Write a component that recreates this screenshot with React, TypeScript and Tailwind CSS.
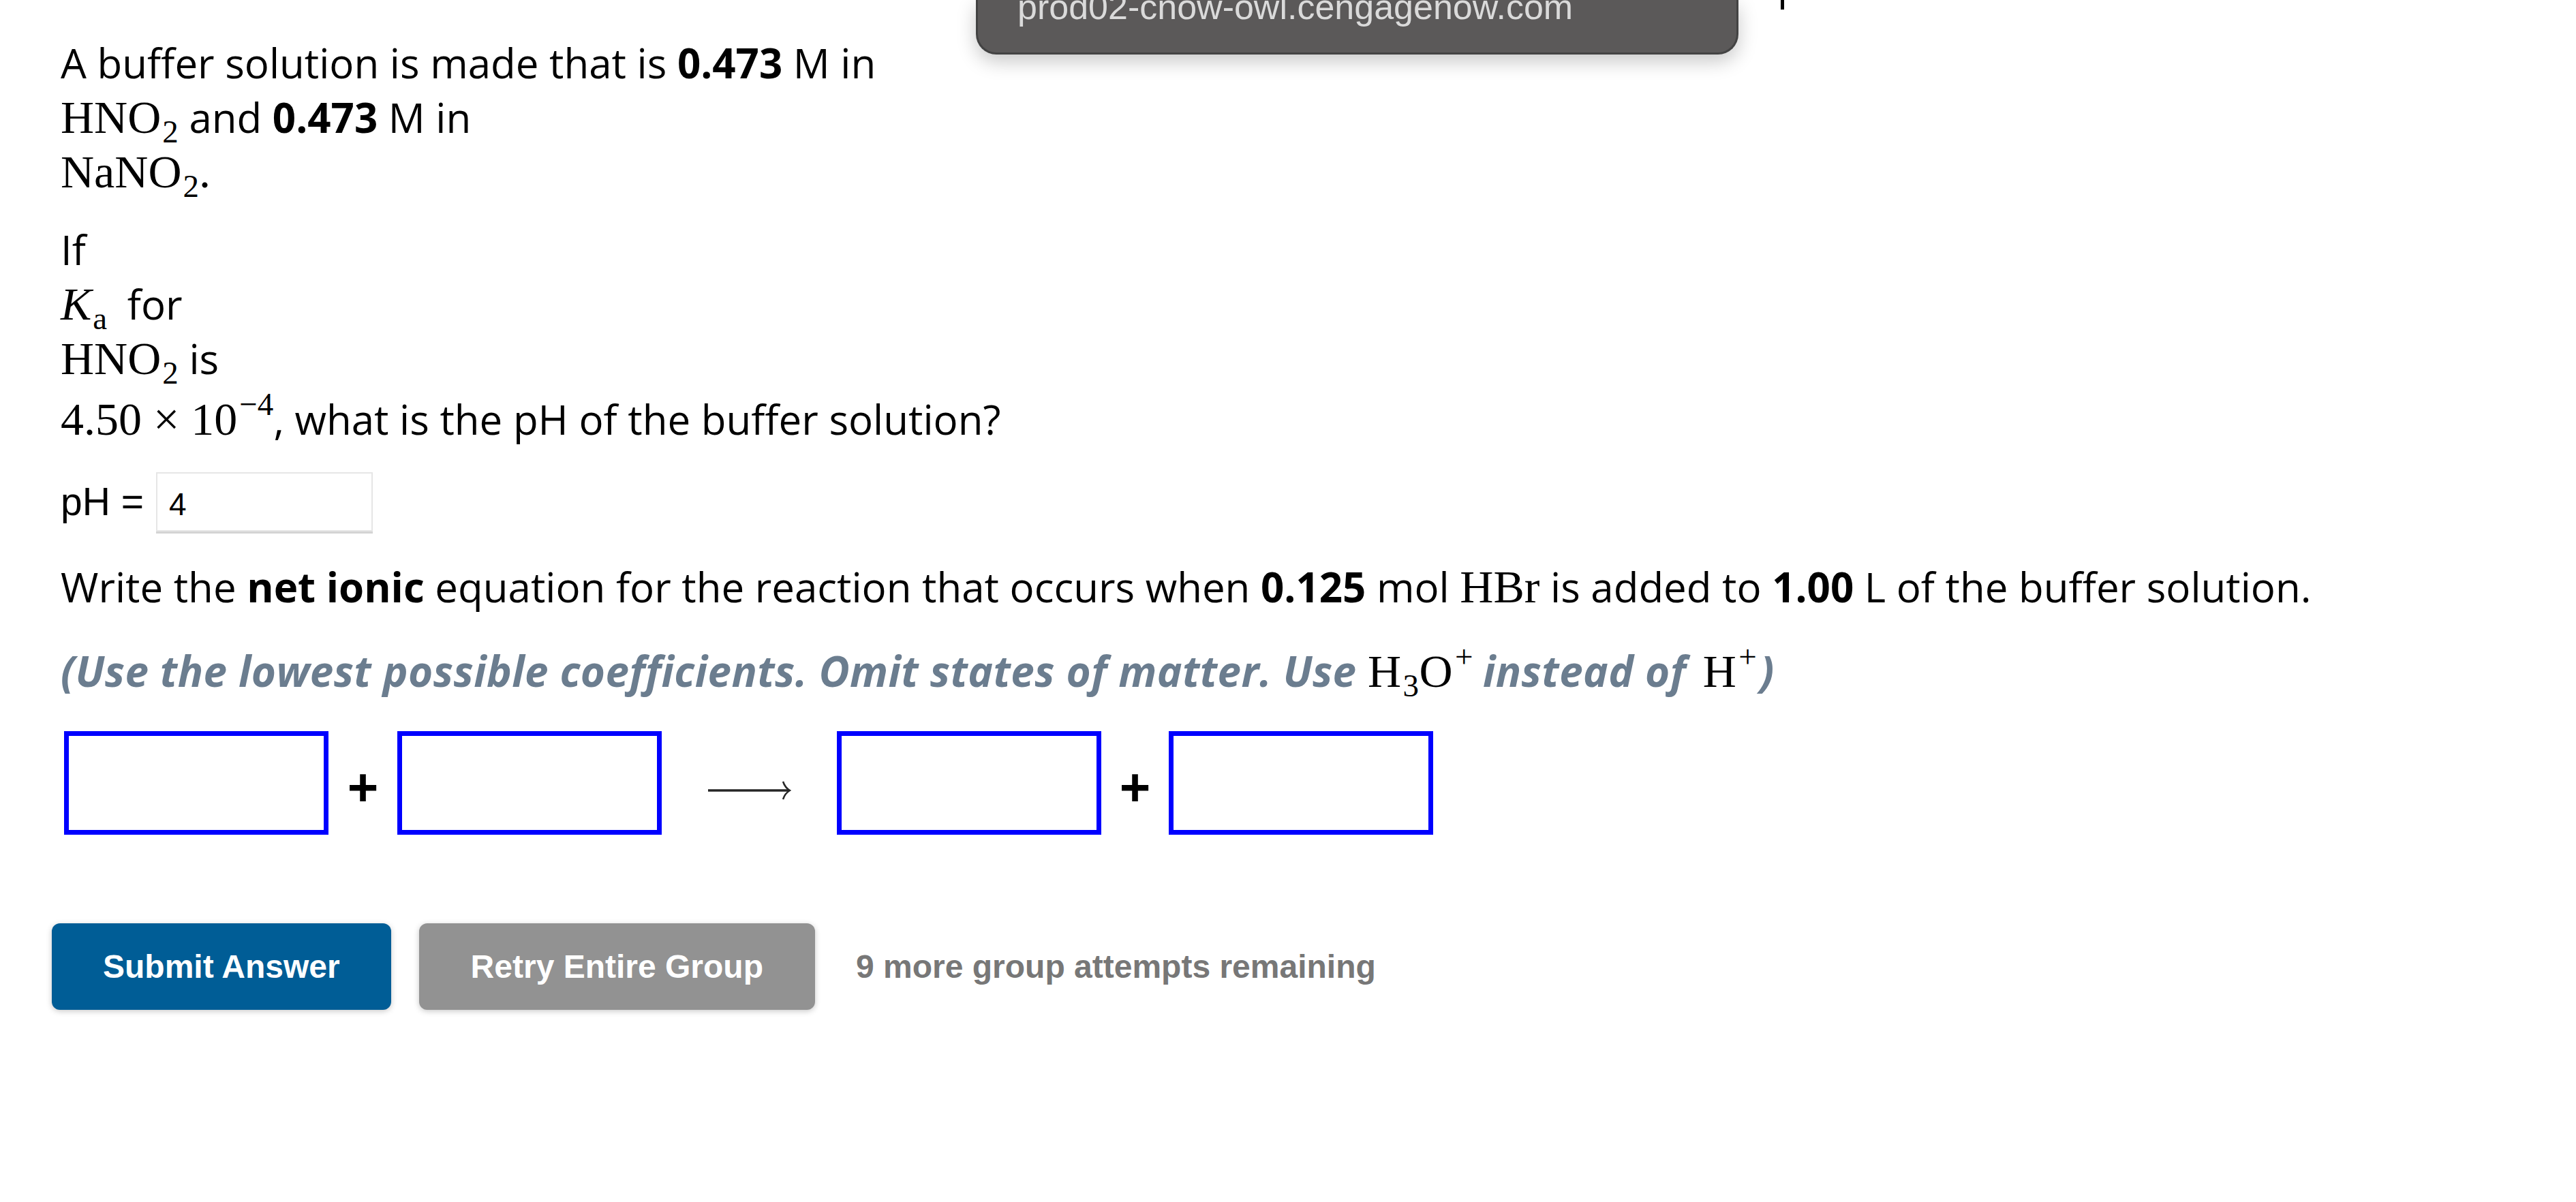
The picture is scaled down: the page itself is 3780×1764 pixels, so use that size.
import React from 'react';

const serif = "font-['Liberation_Serif',serif]";

// chemical formulas / math set in a serif face like the TeX output
const Chem: React.FC<{ children: React.ReactNode }> = ({ children }) => (
  <span className={`${serif} text-[68px] leading-none text-black not-italic font-normal`}>{children}</span>
);

const Sub: React.FC<{ children: React.ReactNode; className?: string }> = ({ children, className }) => (
  <sub className={`text-[47px] bottom-[-0.3em] ml-[2px] ${className ?? ''}`}>{children}</sub>
);

const Sup: React.FC<{ children: React.ReactNode }> = ({ children }) => (
  <sup className="text-[47px] top-[-0.62em] ml-[3px]">{children}</sup>
);

const AnswerBox: React.FC = () => <div className="w-[388px] h-[152px] border-[7px] border-[#0000ff] bg-white shrink-0" />;

const Plus: React.FC<{ w: string }> = ({ w }) => (
  <div className={`${w} h-[152px] flex items-center justify-center pt-[12px] font-['Liberation_Sans',Arial,sans-serif] font-bold text-[78px] leading-none text-black`}>
    +
  </div>
);

const LongArrow: React.FC = () => (
  <svg width="122" height="30" viewBox="0 0 122 30" className="mt-[72px]">
    <path d="M0 15 H118" stroke="#262626" strokeWidth="3.5" />
    <path d="M110 2 Q113 11 120 15 Q113 19 110 28" stroke="#262626" strokeWidth="2.5" fill="none" />
  </svg>
);

const App: React.FC = () => {
  return (
    <div className="relative min-h-screen w-full bg-white overflow-hidden text-black font-['Open_Sans',sans-serif]">
      {/* browser url hover bubble */}
      <div className="absolute top-0 left-[1432px] w-[1119px] h-[80px] bg-[#5b5959] border-[3px] border-t-0 border-[#434343] rounded-b-[30px] shadow-[0_10px_28px_rgba(0,0,0,0.22)] pl-[58px]">
        <div className="-mt-[16px] font-['Liberation_Sans',Arial,sans-serif] text-[52px] leading-[52px] text-[#dadada]">
          prod02-cnow-owl.cengagenow.com
        </div>
      </div>
      <div className="absolute top-0 left-[2613px] w-[5px] h-[14px] bg-black" />

      <div className="pl-[89px] pt-[52px]">
        <div className="text-[60px] leading-[80px]">
          <div>
            A buffer solution is made that is <b className="font-bold">0.473</b> M in
          </div>
          <div>
            <Chem>
              HNO<Sub>2</Sub>
            </Chem>{' '}
            and <b className="font-bold">0.473</b> M in
          </div>
          <div>
            <Chem>
              NaNO<Sub>2</Sub>.
            </Chem>
          </div>
        </div>

        <div className="mt-[34px] text-[60px] leading-[80px]">
          <div>If</div>
          <div>
            <Chem>
              <i>K</i>
              <Sub className="mr-[14px]">a</Sub>
            </Chem>{' '}
            for
          </div>
          <div>
            <Chem>
              HNO<Sub>2</Sub>
            </Chem>{' '}
            is
          </div>
          <div className="mt-[9px]">
            <Chem>
              4.50 × 10<Sup>−4</Sup>
            </Chem>
            , what is the pH of the buffer solution?
          </div>
        </div>

        <div className="mt-[38px] flex items-center">
          <span className="font-['Liberation_Sans',Arial,sans-serif] text-[57px] leading-none">pH =</span>
          <input
            readOnly
            value="4"
            className="ml-[18px] w-[318px] h-[87px] border-2 border-[#e6e6e6] shadow-[0_3px_0_#d4d4d4] pl-[17px] pr-[11px] pt-[6px] text-[46px] font-['Liberation_Sans',Arial,sans-serif] text-black outline-none bg-white"
          />
        </div>

        <div className="mt-[41px] text-[60px] leading-[80px]">
          Write the <b className="font-bold">net ionic</b> equation for the reaction that occurs when{' '}
          <b className="font-bold">0.125</b> mol <Chem>HBr</Chem> is added to <b className="font-bold">1.00</b> L of the
          buffer solution.
        </div>

        <div className="mt-[43px] text-[62px] leading-[80px] tracking-[0.4px] italic font-bold text-[#6b7d8f]">
          (Use the lowest possible coefficients. Omit states of matter. Use{' '}
          <Chem>
            H<Sub>3</Sub>O<Sup>+</Sup>
          </Chem>
          <span className="ml-[14px]">instead of</span>{' '}
          <span className="ml-[8px]">
            <Chem>
              H<Sup>+</Sup>
            </Chem>
          </span>
          <span className="ml-[4px]">)</span>
        </div>

        <div className="mt-[49px] ml-[5px] flex items-start">
          <AnswerBox />
          <Plus w="w-[101px]" />
          <AnswerBox />
          <div className="w-[257px] flex justify-center">
            <LongArrow />
          </div>
          <AnswerBox />
          <Plus w="w-[99px]" />
          <AnswerBox />
        </div>

        <div className="mt-[130px] -ml-[13px] flex items-center font-['Liberation_Sans',Arial,sans-serif] font-bold text-[48px]">
          <button className="h-[127px] px-[75px] rounded-[12px] bg-[#005d96] text-white shadow-[0_2px_8px_rgba(0,0,0,0.22)]">
            Submit Answer
          </button>
          <button className="ml-[41px] h-[127px] px-[76px] rounded-[12px] bg-[#929292] text-white shadow-[0_2px_8px_rgba(0,0,0,0.22)]">
            Retry Entire Group
          </button>
          <span className="ml-[60px] text-[#777777]">9 more group attempts remaining</span>
        </div>
      </div>
    </div>
  );
};

export default App;
